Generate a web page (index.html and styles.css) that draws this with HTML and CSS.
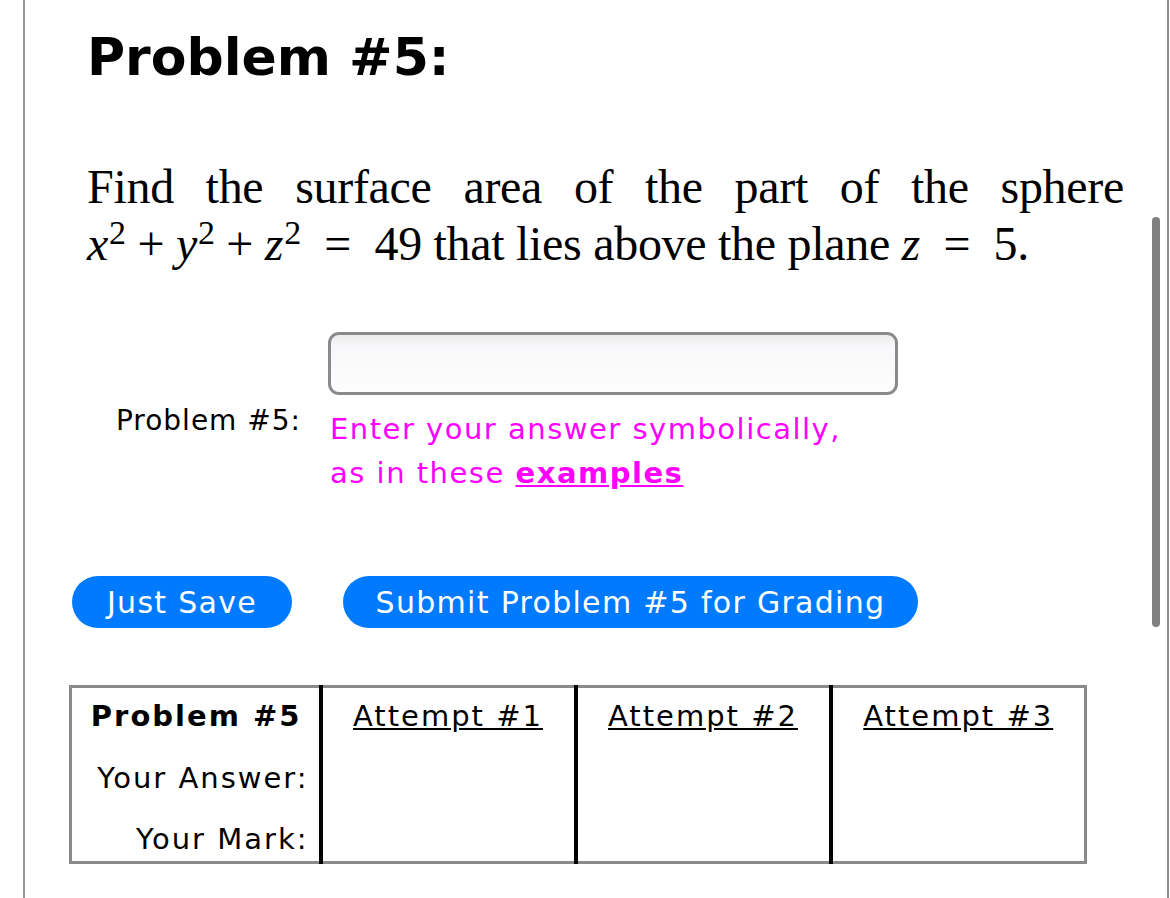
FILE: index.html
```html
<!DOCTYPE html>
<html>
<head>
<meta charset="utf-8">
<link rel="stylesheet" href="styles.css">
</head>
<body>
<div class="page">
  <h1 class="title">Problem #5:</h1>
  <p class="question">Find the surface area of the part of the sphere <span class="eq"><i>x</i><sup>2</sup> + <i>y</i><sup>2</sup> + <i>z</i><sup>2</sup> &nbsp;= &nbsp;49</span> that lies above the plane <i>z</i> &nbsp;= &nbsp;5.</p>

  <div class="answer-row">
    <div class="answer-label">Problem #5:</div>
    <div class="answer-field">
      <div class="answer-input"></div>
      <div class="hint">Enter your answer symbolically,<br>as in these <a class="examples" href="#">examples</a></div>
    </div>
  </div>

  <div class="buttons">
    <button class="btn btn-save">Just Save</button>
    <button class="btn btn-submit">Submit Problem #5 for Grading</button>
  </div>

  <table class="attempts">
    <colgroup>
      <col class="c-lab">
      <col class="c-att">
      <col class="c-att">
      <col class="c-att">
    </colgroup>
    <tr class="r1">
      <th class="lab">Problem #5</th>
      <td class="att"><span class="u">Attempt #1</span></td>
      <td class="att"><span class="u">Attempt #2</span></td>
      <td class="att last"><span class="u">Attempt #3</span></td>
    </tr>
    <tr class="r2">
      <td class="lab">Your Answer:</td>
      <td class="att"></td>
      <td class="att"></td>
      <td class="att last"></td>
    </tr>
    <tr class="r3">
      <td class="lab">Your Mark:</td>
      <td class="att"></td>
      <td class="att"></td>
      <td class="att last"></td>
    </tr>
  </table>
</div>
<div class="scroll-thumb"></div>
</body>
</html>
```
FILE: styles.css
```css
html, body {
  margin: 0;
  padding: 0;
  background: #ffffff;
  height: 100%;
  overflow: hidden;
}
body {
  font-family: "DejaVu Sans", Verdana, sans-serif;
  color: #000;
}
.page {
  margin-left: 23px;
  width: 1142px;
  min-height: 898px;
  border-left: 2px solid #9a9a9a;
  border-right: 2px solid #8c8c8c;
}
.title {
  margin: 0;
  padding: 22px 0 0 62px;
  font-size: 52px;
  font-weight: bold;
  line-height: 70px;
}
.question {
  margin: 66px 0 0 62px;
  width: 1037px;
  font-family: "Liberation Serif", "Times New Roman", serif;
  font-size: 48px;
  line-height: 57px;
  text-align: justify;
  letter-spacing: -0.3px;
}
.question i {
  font-style: italic;
}
.question sup {
  font-size: 34px;
  line-height: 0;
  vertical-align: 16px;
  margin-left: 1px;
}
.eq {
  white-space: nowrap;
}
.answer-row {
  display: flex;
  align-items: center;
  margin-top: 60px;
}
.answer-label {
  width: 303px;
  text-align: right;
  font-size: 28px;
  letter-spacing: 1px;
  padding-right: 27px;
  box-sizing: border-box;
  padding-top: 13px;
}
.answer-field {
  display: flex;
  flex-direction: column;
}
.answer-input {
  width: 570px;
  height: 63px;
  box-sizing: border-box;
  border: 3px solid #8a8a8e;
  border-radius: 11px;
  background: linear-gradient(#ececec 0px, #f8f8fa 12px, #fdfdfe 100%);
}
.hint {
  color: #ff00ff;
  font-size: 29px;
  letter-spacing: 1.5px;
  line-height: 44px;
  margin-top: 12px;
  padding-left: 2px;
}
.examples {
  color: #ff00ff;
  font-weight: bold;
  text-decoration: underline;
}
.buttons {
  display: flex;
  gap: 51px;
  margin: 81px 0 0 47px;
}
.btn {
  background: #007aff;
  color: #fff;
  border: none;
  height: 52px;
  border-radius: 26px;
  font-family: "DejaVu Sans", Verdana, sans-serif;
  font-size: 30px;
  letter-spacing: 1.3px;
  padding: 0;
}
.btn-save {
  width: 220px;
}
.btn-submit {
  width: 575px;
}
.attempts {
  margin: 57px 0 0 44px;
  border-collapse: collapse;
  table-layout: fixed;
  width: 1018px;
  border: 3px solid #8a8a8a;
  font-size: 29px;
  letter-spacing: 2px;
  white-space: nowrap;
}
.c-lab {
  width: 250px;
}
.c-att {
  width: 255px;
}
.attempts th, .attempts td {
  padding: 0;
  vertical-align: top;
  line-height: 34px;
}
.r1 th, .r1 td {
  height: 59px;
  padding-top: 11px;
  box-sizing: border-box;
}
.r2 td {
  height: 61px;
  padding-top: 15px;
  box-sizing: border-box;
}
.r3 td {
  height: 56px;
  padding-top: 15px;
  box-sizing: border-box;
}
.attempts .lab {
  text-align: right;
  padding-right: 10px;
  border-right: 4px solid #000;
}
.attempts th.lab {
  font-weight: bold;
  padding-right: 17px;
}
.attempts .att {
  text-align: center;
  border-right: 4px solid #000;
}
.attempts .att.last {
  border-right: 3px solid #8a8a8a;
}
.u {
  text-decoration: underline;
}
.scroll-thumb {
  position: absolute;
  left: 1152px;
  top: 217px;
  width: 8px;
  height: 410px;
  border-radius: 4px;
  background: #808080;
}
```
